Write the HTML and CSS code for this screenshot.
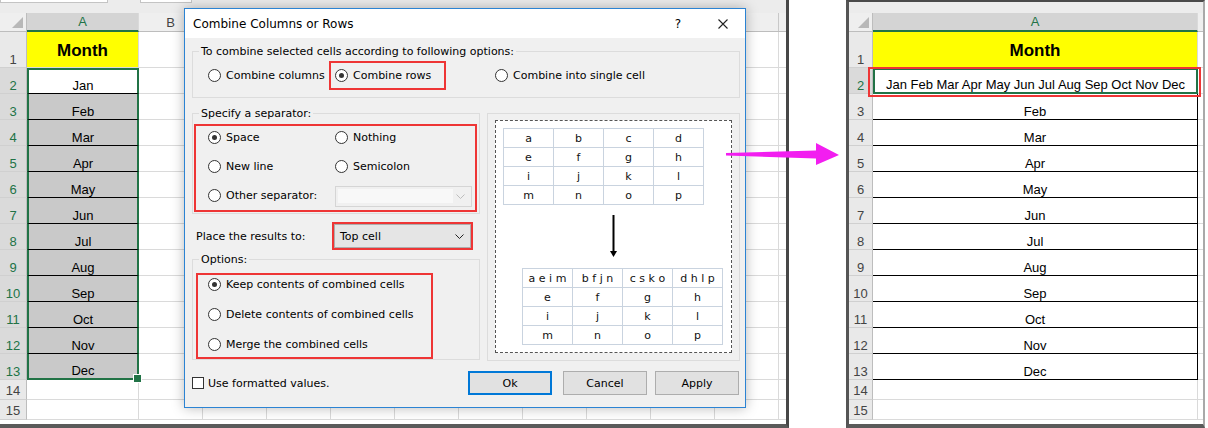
FILE: index.html
```html
<!DOCTYPE html>
<html lang="en">
<head>
    <meta charset="UTF-8">
    <title>Combine Columns or Rows</title>
    <link rel="stylesheet" href="styles.css">
</head>
<body>
<div class="page">

    <!-- before: sheet with the dialog open -->
    <div class="shot shot-left">
        <div class="topbar"><span class="namebox"></span><span class="fxbox"></span></div>
        <div class="sheet">
            <div class="row head">
                <span class="rh corner"></span>
                <span class="c col-a on">A</span>
                <span class="c col-b">B</span>
                <span class="rest"></span>
            </div>
            <div class="row tall">
                <span class="rh">1</span>
                <span class="c col-a month">Month</span>
                <span class="c col-b"></span>
                <span class="rest"></span>
            </div>
            <div class="row"><span class="rh on">2</span><span class="c col-a sel first">Jan</span><span class="c col-b"></span><span class="rest"></span></div>
            <div class="row"><span class="rh on">3</span><span class="c col-a sel">Feb</span><span class="c col-b"></span><span class="rest"></span></div>
            <div class="row"><span class="rh on">4</span><span class="c col-a sel">Mar</span><span class="c col-b"></span><span class="rest"></span></div>
            <div class="row"><span class="rh on">5</span><span class="c col-a sel">Apr</span><span class="c col-b"></span><span class="rest"></span></div>
            <div class="row"><span class="rh on">6</span><span class="c col-a sel">May</span><span class="c col-b"></span><span class="rest"></span></div>
            <div class="row"><span class="rh on">7</span><span class="c col-a sel">Jun</span><span class="c col-b"></span><span class="rest"></span></div>
            <div class="row"><span class="rh on">8</span><span class="c col-a sel">Jul</span><span class="c col-b"></span><span class="rest"></span></div>
            <div class="row"><span class="rh on">9</span><span class="c col-a sel">Aug</span><span class="c col-b"></span><span class="rest"></span></div>
            <div class="row"><span class="rh on">10</span><span class="c col-a sel">Sep</span><span class="c col-b"></span><span class="rest"></span></div>
            <div class="row"><span class="rh on">11</span><span class="c col-a sel">Oct</span><span class="c col-b"></span><span class="rest"></span></div>
            <div class="row"><span class="rh on">12</span><span class="c col-a sel">Nov</span><span class="c col-b"></span><span class="rest"></span></div>
            <div class="row"><span class="rh on">13</span><span class="c col-a sel last">Dec</span><span class="c col-b"></span><span class="rest"></span></div>
            <div class="row short"><span class="rh">14</span><span class="c col-a"></span><span class="c col-b"></span><span class="rest"></span></div>
            <div class="row short"><span class="rh">15</span><span class="c col-a"></span><span class="c col-b"></span><span class="rest"></span></div>
        </div>

        <div class="dialog">
            <div class="dlg-title">
                <span class="dlg-name">Combine Columns or Rows</span>
                <span class="help">?</span>
                <svg class="close" width="10" height="10" viewBox="0 0 10 10"><path d="M0.5 0.5 L9.5 9.5 M9.5 0.5 L0.5 9.5" stroke="#222" stroke-width="1.1" fill="none"/></svg>
            </div>
            <div class="dlg-body">
                <fieldset class="group g-mode">
                    <legend>To combine selected cells according to following options:</legend>
                    <div class="mode-row">
                        <label class="radio w-cols"><i class="rb"></i>Combine columns</label>
                        <div class="mark mark-rows"><label class="radio"><i class="rb on"></i>Combine rows</label></div>
                        <label class="radio single"><i class="rb"></i>Combine into single cell</label>
                    </div>
                </fieldset>

                <div class="dlg-main">
                    <div class="dlg-left">
                        <fieldset class="group g-sep">
                            <legend>Specify a separator:</legend>
                            <div class="sep-wrap">
                                <div class="mark sep-grid">
                                    <label class="radio"><i class="rb on"></i>Space</label>
                                    <label class="radio"><i class="rb"></i>Nothing</label>
                                    <label class="radio"><i class="rb"></i>New line</label>
                                    <label class="radio"><i class="rb"></i>Semicolon</label>
                                    <label class="radio"><i class="rb"></i>Other separator:</label>
                                    <div class="combo off">
                                        <span class="field"></span>
                                        <svg width="9" height="5" viewBox="0 0 9 5"><polyline points="0.5,0.5 4.5,4.5 8.5,0.5" fill="none" stroke="#bdbdbd"/></svg>
                                    </div>
                                </div>
                            </div>
                        </fieldset>

                        <div class="place">
                            <span class="place-label">Place the results to:</span>
                            <div class="mark mark-place">
                                <div class="combo">
                                    <span>Top cell</span>
                                    <svg width="9" height="5" viewBox="0 0 9 5"><polyline points="0.5,0.5 4.5,4.5 8.5,0.5" fill="none" stroke="#222"/></svg>
                                </div>
                            </div>
                        </div>

                        <fieldset class="group g-opt">
                            <legend>Options:</legend>
                            <div class="opt-wrap">
                                <div class="mark opt-list">
                                    <label class="radio"><i class="rb on"></i>Keep contents of combined cells</label>
                                    <label class="radio"><i class="rb"></i>Delete contents of combined cells</label>
                                    <label class="radio"><i class="rb"></i>Merge the combined cells</label>
                                </div>
                            </div>
                        </fieldset>
                    </div>

                    <div class="preview">
                        <div class="canvas">
                            <table class="grid">
                                <tr><td>a</td><td>b</td><td>c</td><td>d</td></tr>
                                <tr><td>e</td><td>f</td><td>g</td><td>h</td></tr>
                                <tr><td>i</td><td>j</td><td>k</td><td>l</td></tr>
                                <tr><td>m</td><td>n</td><td>o</td><td>p</td></tr>
                            </table>
                            <svg class="down" width="9" height="42" viewBox="0 0 9 42">
                                <line x1="4.5" y1="0" x2="4.5" y2="37" stroke="#000" stroke-width="2"/>
                                <polygon points="1,36 8,36 4.5,42" fill="#000"/>
                            </svg>
                            <table class="grid grid-out">
                                <tr><td>a e i m</td><td>b f j n</td><td>c s k o</td><td>d h l p</td></tr>
                                <tr><td>e</td><td>f</td><td>g</td><td>h</td></tr>
                                <tr><td>i</td><td>j</td><td>k</td><td>l</td></tr>
                                <tr><td>m</td><td>n</td><td>o</td><td>p</td></tr>
                            </table>
                        </div>
                    </div>
                </div>

                <div class="dlg-foot">
                    <label class="check"><i class="cb"></i>Use formatted values.</label>
                    <div class="buttons">
                        <button class="btn default">Ok</button>
                        <button class="btn">Cancel</button>
                        <button class="btn">Apply</button>
                    </div>
                </div>
            </div>
        </div>
    </div>

    <!-- after: rows combined into A2 -->
    <div class="shot shot-right">
        <div class="topbar"></div>
        <div class="sheet">
            <div class="row head">
                <span class="rh corner"></span>
                <span class="c col-a on">A</span>
                <span class="rest"></span>
            </div>
            <div class="row tall">
                <span class="rh">1</span>
                <span class="c col-a month">Month</span>
                <span class="rest"></span>
            </div>
            <div class="row"><span class="rh on">2</span><span class="c col-a picked">Jan Feb Mar Apr May Jun Jul Aug Sep Oct Nov Dec</span><span class="rest"></span></div>
            <div class="row"><span class="rh">3</span><span class="c col-a boxed">Feb</span><span class="rest"></span></div>
            <div class="row"><span class="rh">4</span><span class="c col-a boxed">Mar</span><span class="rest"></span></div>
            <div class="row"><span class="rh">5</span><span class="c col-a boxed">Apr</span><span class="rest"></span></div>
            <div class="row"><span class="rh">6</span><span class="c col-a boxed">May</span><span class="rest"></span></div>
            <div class="row"><span class="rh">7</span><span class="c col-a boxed">Jun</span><span class="rest"></span></div>
            <div class="row"><span class="rh">8</span><span class="c col-a boxed">Jul</span><span class="rest"></span></div>
            <div class="row"><span class="rh">9</span><span class="c col-a boxed">Aug</span><span class="rest"></span></div>
            <div class="row"><span class="rh">10</span><span class="c col-a boxed">Sep</span><span class="rest"></span></div>
            <div class="row"><span class="rh">11</span><span class="c col-a boxed">Oct</span><span class="rest"></span></div>
            <div class="row"><span class="rh">12</span><span class="c col-a boxed">Nov</span><span class="rest"></span></div>
            <div class="row"><span class="rh">13</span><span class="c col-a boxed">Dec</span><span class="rest"></span></div>
            <div class="row short"><span class="rh">14</span><span class="c col-a"></span><span class="rest"></span></div>
            <div class="row short"><span class="rh">15</span><span class="c col-a"></span><span class="rest"></span></div>
        </div>
        <div class="result-mark"></div>
    </div>

    <!-- magenta pointer between the two shots -->
    <svg class="pointer" width="125" height="32" viewBox="720 138 125 32">
        <polygon points="726,153 816,150.5 816,143 839,155 816,165 816,158.5 726,155.5" fill="#f21ef0"/>
    </svg>
</div>
</body>
</html>
```

FILE: styles.css
```css
* {
    box-sizing: border-box;
    margin: 0;
    padding: 0;
}

body {
    background: #fff;
    font-family: "Liberation Sans", Arial, sans-serif;
}

.page {
    position: relative;
    display: flex;
    width: 1208px;
    height: 428px;
    overflow: hidden;
}

/* screenshot frames */
.shot {
    position: relative;
    display: flex;
    flex-direction: column;
    background: #fff;
    overflow: hidden;
}

.shot-left {
    width: 789px;
    height: 428px;
    border-right: 3px solid #474747;
    border-bottom: 4px solid #5a5a5a;
}

.shot-right {
    width: 359px;
    height: 428px;
    margin-left: 57px;
    border-top: 2px solid #4a4a4a;
    border-left: 3px solid #555;
    border-right: 2px solid #a9a9a9;
    border-bottom: 4px solid #5a5a5a;
}

.topbar {
    display: flex;
    height: 13px;
    background: #ececec;
}

.shot-right .topbar {
    height: 11px;
}

.namebox {
    width: 108px;
    height: 3px;
    background: #fff;
    border: 1px solid #c4c4c4;
    border-top: 0;
}

.fxbox {
    width: 52px;
    height: 3px;
    margin-left: 32px;
    background: #fff;
    border: 1px solid #c4c4c4;
    border-top: 0;
}

/* sheet grid */
.row {
    display: flex;
    height: 26px;
}

.row > * {
    flex-shrink: 0;
}

.row.head { height: 19px; }
.row.tall { height: 36px; }
.row.short { height: 20px; }

.rh {
    width: 27px;
    display: flex;
    align-items: flex-end;
    justify-content: center;
    padding-bottom: 0;
    background: #e9e9e9;
    border-right: 1px solid #bdbdbd;
    border-bottom: 1px solid #d0d0d0;
    color: #444;
    font-size: 13px;
}

.short .rh {
    padding-bottom: 1px;
}

.rh.on {
    background: #dadada;
    color: #217346;
}

.shot-right .rh {
    width: 24px;
}

.c {
    display: flex;
    align-items: flex-end;
    justify-content: center;
    padding-bottom: 0;
    border-right: 1px solid #dadada;
    border-bottom: 1px solid #dadada;
    font-size: 13px;
    color: #000;
    white-space: nowrap;
}

.col-a { width: 112px; }
.col-b { width: 64px; }

.shot-right .col-a { width: 325px; }

.rest {
    flex: 1 !important;
    border-bottom: 1px solid #dadada;
    background: repeating-linear-gradient(to right, transparent 0 63px, #dadada 63px 64px);
}

/* column header row */
.head .rh,
.head .c,
.head .rest {
    align-items: center;
    padding-bottom: 0;
    background-color: #efefef;
    border-bottom: 1px solid #bdbdbd;
    color: #444;
}

.head .rest {
    background-image: repeating-linear-gradient(to right, transparent 0 63px, #c8c8c8 63px 64px);
}

.head .c.on {
    background-color: #d4d4d4;
    color: #217346;
    border-bottom: 2px solid #217346;
}

.corner {
    position: relative;
}

.corner::after {
    content: "";
    position: absolute;
    right: 3px;
    bottom: 3px;
    border-left: 11px solid transparent;
    border-bottom: 11px solid #b8b8b8;
}

.month {
    align-items: center;
    padding-top: 3px;
    background: #ffff00;
    font-size: 17px;
    font-weight: bold;
}

/* left selection A2:A13 */
.sel {
    background: #c9c9c9;
    border-left: 2px solid #217346;
    border-right: 2px solid #217346;
    border-bottom: 1px solid #000;
}

.sel.first {
    background: #fff;
    border-top: 2px solid #217346;
}

.sel.last {
    position: relative;
    border-bottom: 2px solid #217346;
    overflow: visible;
    z-index: 1;
}

.sel.last::after {
    content: "";
    position: absolute;
    right: -5px;
    bottom: -5px;
    width: 7px;
    height: 7px;
    background: #217346;
    border: 1px solid #fff;
}

/* right sheet */
.boxed {
    border-right: 1px solid #000;
    border-bottom: 1px solid #000;
}

.picked {
    border: 2px solid #217346;
}

.result-mark {
    position: absolute;
    left: 19px;
    top: 65px;
    width: 333px;
    height: 30px;
    border: 2px solid #ee3535;
}

/* dialog */
.dialog {
    position: absolute;
    left: 184px;
    top: 8px;
    width: 562px;
    height: 400px;
    display: flex;
    flex-direction: column;
    background: #f0f0f0;
    border: 1px solid #2b83d3;
    box-shadow: 0 0 12px rgba(0, 0, 0, 0.28);
    font-family: "DejaVu Sans", sans-serif;
    font-size: 11px;
    color: #000;
}

.dlg-title {
    display: flex;
    align-items: center;
    height: 29px;
    padding-left: 8px;
    background: #fff;
    font-size: 12px;
}

.help {
    width: 12px;
    margin-left: auto;
    margin-right: 34px;
    font-size: 12px;
    text-align: center;
}

.close {
    margin-right: 17px;
}

.dlg-body {
    flex: 1;
    padding: 0 5px 0 7px;
}

.group {
    border: 1px solid #dcdcdc;
    min-width: 0;
}

.group legend {
    margin-left: 6px;
    padding: 0 2px;
    line-height: 13px;
}

.mark {
    border: 2px solid #ee3535;
}

.radio {
    display: flex;
    align-items: center;
    gap: 5px;
    white-space: nowrap;
}

.rb {
    flex-shrink: 0;
    width: 13px;
    height: 13px;
    display: flex;
    align-items: center;
    justify-content: center;
    background: #fff;
    border: 1px solid #333;
    border-radius: 50%;
}

.rb.on::after {
    content: "";
    width: 5px;
    height: 5px;
    border-radius: 50%;
    background: #333;
}

.g-mode {
    margin-top: 7px;
}

.mode-row {
    display: flex;
    align-items: center;
    padding: 3px 0 7px 15px;
}

.w-cols {
    width: 121px;
}

.mark-rows {
    display: flex;
    align-items: center;
    width: 117px;
    height: 29px;
    padding-left: 4px;
}

.single {
    margin-left: 49px;
}

.dlg-main {
    display: flex;
    gap: 7px;
}

.dlg-left {
    width: 288px;
}

.g-sep {
    margin-top: 9px;
}

.sep-wrap {
    padding: 4px 2px 1px 1px;
}

.sep-grid {
    display: grid;
    grid-template-columns: 127px 1fr;
    grid-auto-rows: 24px;
    row-gap: 5px;
    align-items: center;
    padding: 0 3px 2px 12px;
}

.sep-grid .radio {
    margin-top: -2px;
}

.combo {
    display: flex;
    align-items: center;
    justify-content: space-between;
    height: 24px;
    padding: 0 6px 0 5px;
    background: #e5e5e5;
    border: 1px solid #adadad;
}

.combo.off {
    height: 21px;
    padding: 0 6px 0 2px;
    background: #f0f0f0;
    border-color: #d5d5d5;
}

.combo.off .field {
    width: 115px;
    height: 14px;
    background: #f8f8f8;
}

.place {
    display: flex;
    align-items: center;
    height: 28px;
    margin-top: 8px;
    padding-left: 4px;
}

.place-label {
    width: 136px;
}

.mark-place {
    width: 141px;
    height: 28px;
}

.g-opt {
    margin-top: 3px;
}

.opt-wrap {
    padding: 7px 0 0 3px;
}

.opt-list {
    display: flex;
    flex-direction: column;
    gap: 10px;
    width: 237px;
    padding: 0 0 2px 10px;
}

.opt-list .radio {
    height: 20px;
    margin-top: -1px;
    margin-bottom: 1px;
}

/* preview */
.preview {
    width: 253px;
    height: 248px;
    margin-top: 15px;
    padding: 6px 7px 7px 7px;
    border: 1px solid #dcdcdc;
}

.canvas {
    height: 100%;
    padding: 7px 0 0 7px;
    background: #fff;
    border: 1px dashed #555;
}

.grid {
    width: 201px;
    height: 77px;
    border-collapse: collapse;
    table-layout: fixed;
}

.grid td {
    padding: 0;
    border: 1px solid #c9d3df;
    text-align: center;
    font-size: 11px;
    line-height: 17px;
    color: #111;
    white-space: nowrap;
}

.down {
    display: block;
    margin: 10px 0 11px 106px;
}

.grid-out {
    margin-left: 19px;
}

/* footer */
.dlg-foot {
    display: flex;
    align-items: center;
    height: 24px;
    margin-top: 10px;
}

.check {
    display: flex;
    align-items: center;
    gap: 4px;
}

.cb {
    width: 12px;
    height: 12px;
    background: #fff;
    border: 1px solid #333;
}

.buttons {
    display: flex;
    margin-left: auto;
    margin-right: 1px;
}

.btn {
    width: 84px;
    height: 24px;
    margin-left: 9px;
    background: #e1e1e1;
    border: 1px solid #adadad;
    font-family: "DejaVu Sans", sans-serif;
    font-size: 11px;
    color: #000;
}

.btn.default {
    border: 2px solid #0078d7;
}

.btn + .btn {
    margin-left: 11px;
}

.btn + .btn + .btn {
    margin-left: 8px;
}

.pointer {
    position: absolute;
    left: 720px;
    top: 138px;
}
```
